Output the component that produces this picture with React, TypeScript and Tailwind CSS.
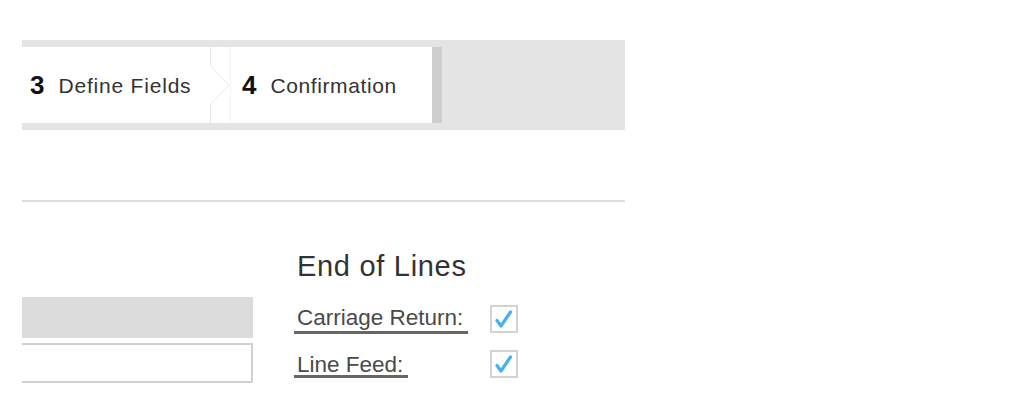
import React from "react";

function Check() {
  return (
    <div className="w-[28px] h-[28px] border-2 border-[#d2d2d2] bg-white flex items-center justify-center">
      <svg width="24" height="24" viewBox="0 0 24 24">
        <path d="M5 13.5 L9 19 L18.5 5" fill="none" stroke="#45b1ee" strokeWidth="3.2" strokeLinecap="round" strokeLinejoin="round" />
      </svg>
    </div>
  );
}

export default function App() {
  return (
    <div className="w-[1024px] h-[404px] bg-white overflow-hidden" style={{ fontFamily: '"Liberation Sans", Arial, sans-serif' }}>
      <div className="ml-[22px] w-[603px] pt-[40px]">
        {/* Wizard band */}
        <div className="h-[90px] bg-[#e4e4e4] py-[7px] flex">
          <div className="flex h-full bg-white">
            <div className="w-[188px] h-full flex items-center pl-[8px] gap-[14px]">
              <span className="text-[26px] font-bold text-[#111] leading-none">3</span>
              <span className="text-[21px] tracking-[0.8px] text-[#333] leading-none">Define Fields</span>
            </div>
            <div className="relative w-[222px] h-full flex items-center pl-[32px] gap-[14px]">
              <svg className="absolute left-0 top-0" width="22" height="76" viewBox="0 0 22 76">
                <path d="M0.5 0 V19 L19 38 L0.5 57 V76" fill="none" stroke="#e8e8e8" strokeWidth="1" />
                <path d="M20.5 0 V76" fill="none" stroke="#f4f4f4" strokeWidth="1" />
              </svg>
              <span className="text-[26px] font-bold text-[#111] leading-none">4</span>
              <span className="text-[21px] tracking-[0.6px] text-[#333] leading-none">Confirmation</span>
            </div>
          </div>
          <div className="w-[10px] h-full bg-[#cfcfcf]" />
        </div>

        {/* Divider */}
        <div className="mt-[70px] h-[2px] bg-[#dddddd]" />

        {/* Content */}
        <div className="flex">
          <div className="w-[231px] pt-[95px]">
            <div className="h-[41px] bg-[#dcdcdc]" />
            <div className="mt-[5px] h-[40px] border-2 border-l-0 border-[#d0d0d0] bg-white" />
          </div>
          <div className="ml-[41px] pt-[50px] flex flex-col">
            <div className="ml-[3px] text-[29px] tracking-[0.7px] leading-none text-[#333]">End of Lines</div>
            <div className="mt-[24px] flex items-start">
              <div className="w-[196px]">
                <span className="inline-block pl-[3px] pr-[5px] text-[22.5px] leading-[26px] text-[#4a4a4a] border-b-[3px] border-[#666]">Carriage Return:</span>
              </div>
              <Check />
            </div>
            <div className="mt-[16px] flex items-start">
              <div className="w-[196px] pt-[4.5px]">
                <span className="inline-block pl-[3px] pr-[5px] text-[22.5px] leading-[20px] text-[#4a4a4a] border-b-[3px] border-[#666]">Line Feed:</span>
              </div>
              <Check />
            </div>
          </div>
        </div>
      </div>
    </div>
  );
}
